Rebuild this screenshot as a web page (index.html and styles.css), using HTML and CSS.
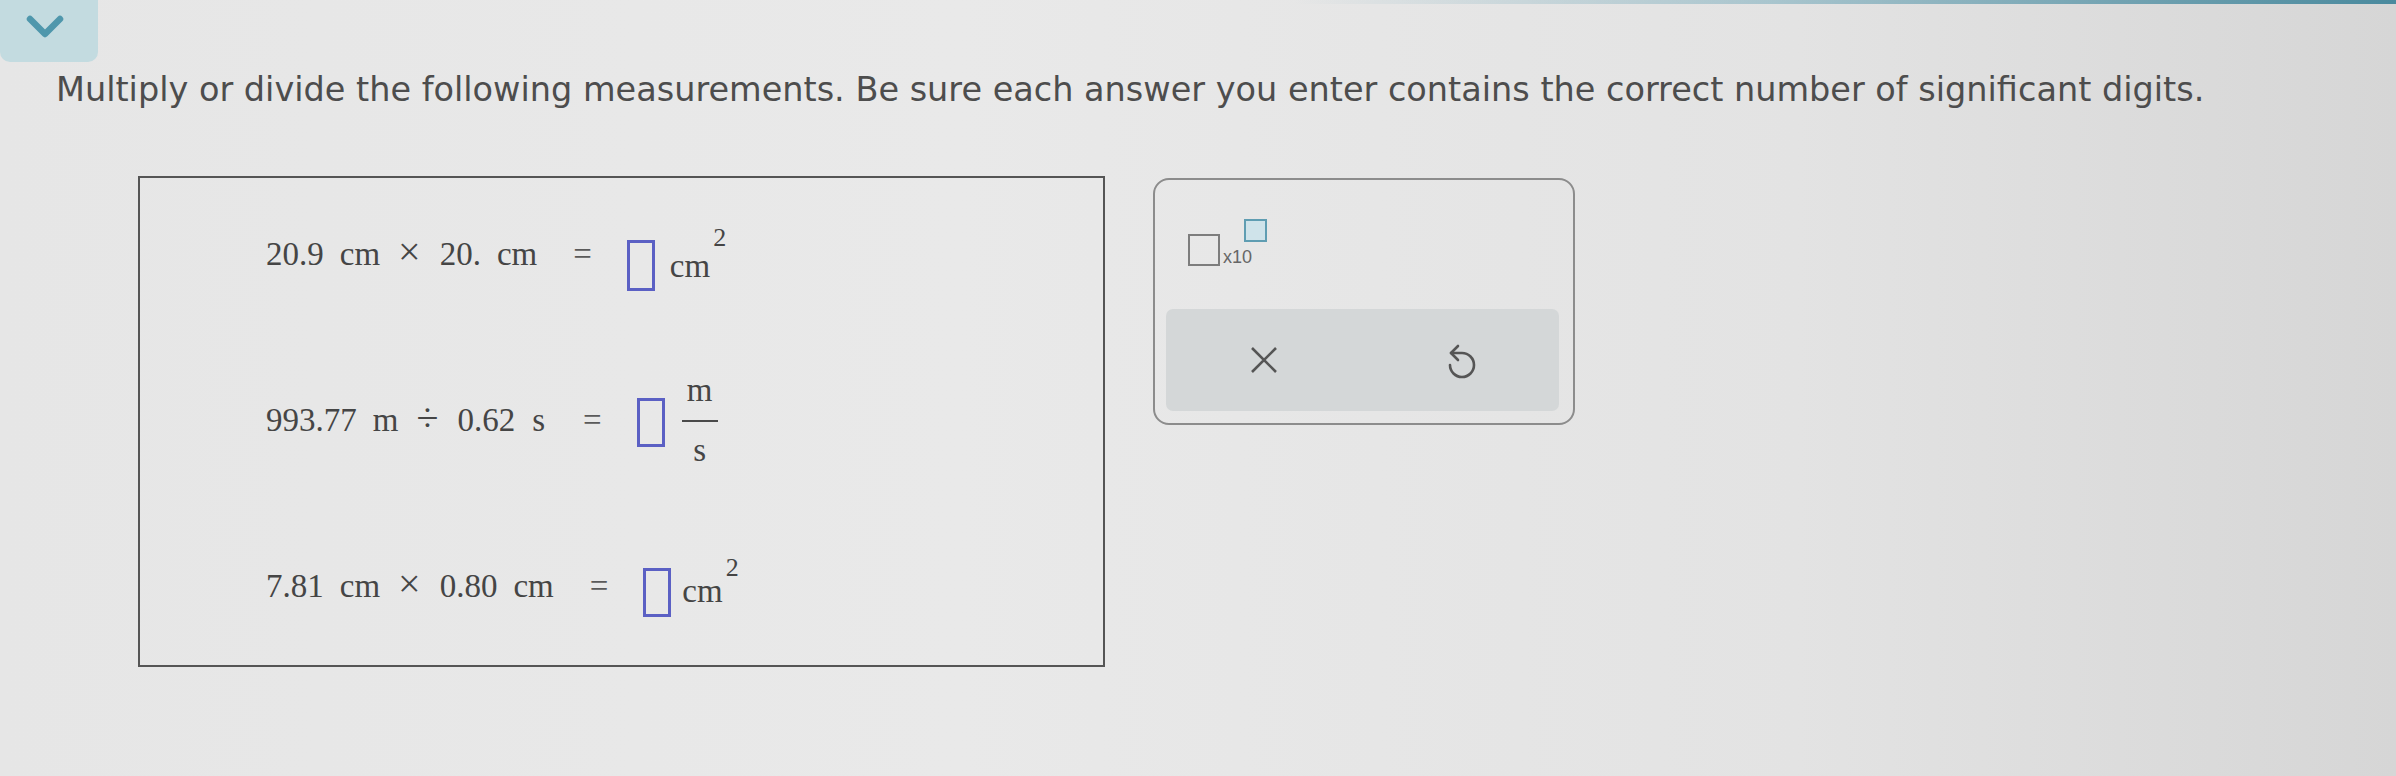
FILE: index.html
```html
<!DOCTYPE html>
<html lang="en">
<head>
<meta charset="utf-8">
<title>Significant digits</title>
<link rel="stylesheet" href="styles.css">
</head>
<body>
<div class="page">
  <div class="tab">
    <svg class="chev" width="38" height="24" viewBox="0 0 38 24"><polyline points="4,4 19,19 34,4" fill="none" stroke="#4f97ac" stroke-width="6.5" stroke-linecap="round" stroke-linejoin="round"/></svg>
  </div>
  <p class="prompt">Multiply or divide the following measurements. Be sure each answer you enter contains the correct number of significant digits.</p>
  <div class="content">
    <div class="problem">
      <div class="row r1">
        <div class="expr"><span>20.9</span><span class="sp">cm</span><span class="op">×</span><span>20.</span><span class="sp">cm</span></div>
        <div class="eq">=</div>
        <div class="ansbox"></div>
        <div class="unit"><span>cm</span><span class="sup">2</span></div>
      </div>
      <div class="row r2">
        <div class="expr"><span>993.77</span><span class="sp">m</span><span class="op">÷</span><span>0.62</span><span class="sp2">s</span></div>
        <div class="eq">=</div>
        <div class="ansbox"></div>
        <div class="frac"><span class="num">m</span><span class="bar"></span><span class="den">s</span></div>
      </div>
      <div class="row r3">
        <div class="expr"><span>7.81</span><span class="sp">cm</span><span class="op">×</span><span>0.80</span><span class="sp">cm</span></div>
        <div class="eq">=</div>
        <div class="ansbox"></div>
        <div class="unit"><span>cm</span><span class="sup">2</span></div>
      </div>
    </div>
    <div class="tools">
      <div class="expo">
        <span class="base"></span><span class="x10">x10</span><span class="pow"></span>
      </div>
      <div class="panel">
        <div class="btn">
          <svg width="28" height="28" viewBox="0 0 28 28"><path d="M2 2 L26 26 M26 2 L2 26" stroke="#555" stroke-width="2.6" fill="none"/></svg>
        </div>
        <div class="btn">
          <svg width="60" height="60" viewBox="0 0 60 60"><path d="M20 23 H31 A12 12 0 1 1 19 35" fill="none" stroke="#555" stroke-width="2.6" stroke-linecap="round"/><path d="M27 16 L20 23 L27 30" fill="none" stroke="#555" stroke-width="2.6" stroke-linecap="round" stroke-linejoin="round"/></svg>
        </div>
      </div>
    </div>
  </div>
</div>
</body>
</html>
```
FILE: styles.css
```css
html, body {
  margin: 0;
  padding: 0;
}
body {
  width: 2396px;
  height: 776px;
  overflow: hidden;
  background:
    linear-gradient(90deg, rgba(79,143,162,0) 54%, rgba(120,172,188,0.55) 74%, #4a8a9e 100%) top left / 100% 4px no-repeat,
    linear-gradient(90deg, #e6e6e6 0%, #e9e9e9 40%, #e3e3e3 75%, #d6d6d6 100%);
}
.page {
  width: 2396px;
  height: 776px;
}
.tab {
  width: 98px;
  height: 62px;
  box-sizing: border-box;
  padding: 15px 0 0 26px;
  background: #c3dbe0;
  border-radius: 0 0 10px 10px;
}
.chev {
  display: block;
}
.prompt {
  margin: 10px 0 0 56px;
  font-family: "DejaVu Sans", sans-serif;
  font-size: 33.5px;
  line-height: 36px;
  color: #4d4d4d;
  white-space: nowrap;
}
.content {
  display: flex;
  align-items: flex-start;
  gap: 48px;
  margin: 68px 0 0 138px;
}
.problem {
  box-sizing: border-box;
  width: 967px;
  height: 491px;
  border: 2px solid #555;
  padding: 60px 0 0 126px;
  display: grid;
  grid-template-rows: 166px 166px 1fr;
  font-family: "Liberation Serif", "Times New Roman", serif;
  font-size: 33px;
  line-height: 33px;
  color: #454545;
}
.row {
  display: flex;
  align-items: flex-start;
}
.expr {
  display: flex;
  align-items: baseline;
}
.sp { margin-left: 16px; }
.sp2 { margin-left: 17px; }
.op {
  font-size: 40px;
  line-height: 28px;
  margin: 0 19px 0 18px;
}
.eq {
  margin-left: 36px;
  color: #5a5a5a;
}
.r2 .eq { margin-left: 38px; }
.ansbox {
  box-sizing: border-box;
  width: 28px;
  height: 49px;
  margin-left: 35px;
  border: 3px solid #5b60c4;
}
.r1 .ansbox { height: 51px; margin-top: 2px; }
.r2 .ansbox { margin-top: -6px; }
.r3 .ansbox { margin-top: -2px; }
.unit {
  display: flex;
  align-items: flex-start;
  margin-left: 15px;
}
.r1 .unit { margin-top: 12px; }
.r3 .unit { margin-top: 5px; margin-left: 11px; }
.sup {
  font-size: 26px;
  line-height: 26px;
  margin-left: 3px;
}
.r1 .sup { margin-top: -25px; }
.r3 .sup { margin-top: -20px; }
.frac {
  display: flex;
  flex-direction: column;
  align-items: center;
  width: 36px;
  margin: -30px 0 0 17px;
}
.frac .bar {
  display: block;
  width: 36px;
  height: 2px;
  margin: 13px 0 12px;
  background: #4a4a4a;
}
.tools {
  box-sizing: border-box;
  width: 422px;
  height: 247px;
  margin-top: 2px;
  border: 2px solid #8c8c8c;
  border-radius: 16px;
}
.expo {
  display: flex;
  align-items: flex-start;
  margin: 39px 0 0 33px;
  height: 47px;
}
.base {
  box-sizing: border-box;
  width: 32px;
  height: 32px;
  margin-top: 15px;
  border: 2px solid #7d7d7d;
}
.x10 {
  margin: 29px 0 0 3px;
  font-family: "Liberation Sans", Arial, sans-serif;
  font-size: 18px;
  line-height: 18px;
  color: #666;
}
.pow {
  box-sizing: border-box;
  width: 23px;
  height: 23px;
  margin-left: -8px;
  background: #cfe3ea;
  border: 2px solid #5f9db2;
}
.panel {
  display: flex;
  width: 393px;
  height: 102px;
  margin: 43px 0 0 11px;
  background: #d4d7d8;
  border-radius: 7px;
}
.btn {
  flex: 1;
  display: flex;
  align-items: center;
  justify-content: center;
}
.btn svg {
  display: block;
}
```
